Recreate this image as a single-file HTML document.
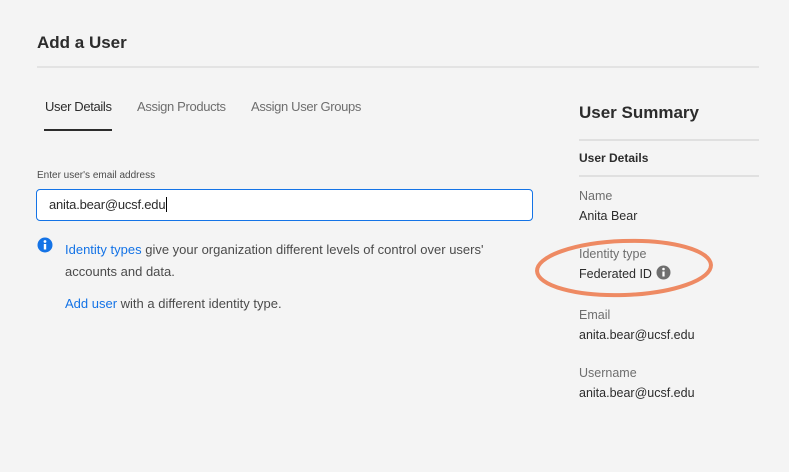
<!DOCTYPE html>
<html><head><style>
body{margin:0;width:789px;height:472px;background:#f4f4f4;font-family:"Liberation Sans",sans-serif;position:relative;overflow:hidden;color:#2c2c2c}
.a{position:absolute;white-space:nowrap}
</style></head><body>
<div class="a" style="left:37px;top:33px;font-size:17px;font-weight:bold;color:#2c2c2c">Add a User</div>
<div class="a" style="left:37px;top:66px;width:722px;height:2px;background:#e3e3e3"></div>
<div class="a" style="left:45px;top:99px;font-size:13px;letter-spacing:-0.35px;color:#2c2c2c">User Details</div>
<div class="a" style="left:137px;top:99px;font-size:13px;letter-spacing:-0.35px;color:#6e6e6e">Assign Products</div>
<div class="a" style="left:251px;top:99px;font-size:13px;letter-spacing:-0.35px;color:#6e6e6e">Assign User Groups</div>
<div class="a" style="left:44px;top:129px;width:68px;height:2px;background:#2c2c2c"></div>
<div class="a" style="left:37px;top:170px;font-size:10px;color:#4b4b4b">Enter user's email address</div>
<div class="a" style="left:36px;top:189px;width:495px;height:30px;border:1px solid #1473e6;border-radius:4px;background:#fff"></div>
<div class="a" style="left:49px;top:197px;font-size:13px;letter-spacing:-0.2px;color:#2c2c2c">anita.bear@ucsf.edu<span style="border-left:1px solid #000;margin-left:1px"></span></div>
<svg class="a" style="left:37px;top:237px" width="16" height="16"><circle cx="8" cy="8" r="7.5" fill="#1473e6"/><rect x="6.8" y="7" width="2.4" height="5.5" fill="#fff"/><circle cx="8" cy="4.5" r="1.4" fill="#fff"/></svg>
<div class="a" style="left:65px;top:239px;font-size:13px;line-height:22px;color:#4b4b4b"><span style="color:#1473e6">Identity types</span> give your organization different levels of control over users'<br>accounts and data.</div>
<div class="a" style="left:65px;top:296px;font-size:13px;color:#4b4b4b"><span style="color:#1473e6">Add user</span> with a different identity type.</div>
<div class="a" style="left:579px;top:103px;font-size:17px;font-weight:bold;color:#2c2c2c">User Summary</div>
<div class="a" style="left:579px;top:139px;width:180px;height:2px;background:#e0e0e0"></div>
<div class="a" style="left:579px;top:151px;font-size:12px;font-weight:bold;color:#2c2c2c">User Details</div>
<div class="a" style="left:579px;top:175px;width:180px;height:2px;background:#e0e0e0"></div>
<div class="a" style="left:579px;top:186px;font-size:12.5px;line-height:20px;color:#6e6e6e">Name<br><span style="color:#2c2c2c">Anita Bear</span></div>
<div class="a" style="left:579px;top:244px;font-size:12.5px;line-height:20px;color:#6e6e6e">Identity type<br><span style="color:#2c2c2c">Federated ID</span></div>
<svg class="a" style="left:656px;top:265px" width="15" height="15"><circle cx="7.5" cy="7.5" r="7" fill="#6e6e6e"/><rect x="6.4" y="6.5" width="2.2" height="5" fill="#fff"/><circle cx="7.5" cy="4" r="1.3" fill="#fff"/></svg>
<div class="a" style="left:579px;top:305px;font-size:12.5px;line-height:20px;color:#6e6e6e">Email<br><span style="color:#2c2c2c">anita.bear@ucsf.edu</span></div>
<div class="a" style="left:579px;top:363px;font-size:12.5px;line-height:20px;color:#6e6e6e">Username<br><span style="color:#2c2c2c">anita.bear@ucsf.edu</span></div>
<svg class="a" style="left:0;top:0" width="789" height="472"><ellipse cx="624" cy="268" rx="87" ry="27" transform="rotate(-2 624 268)" fill="none" stroke="#ee8a63" stroke-width="4"/></svg>
</body></html>
